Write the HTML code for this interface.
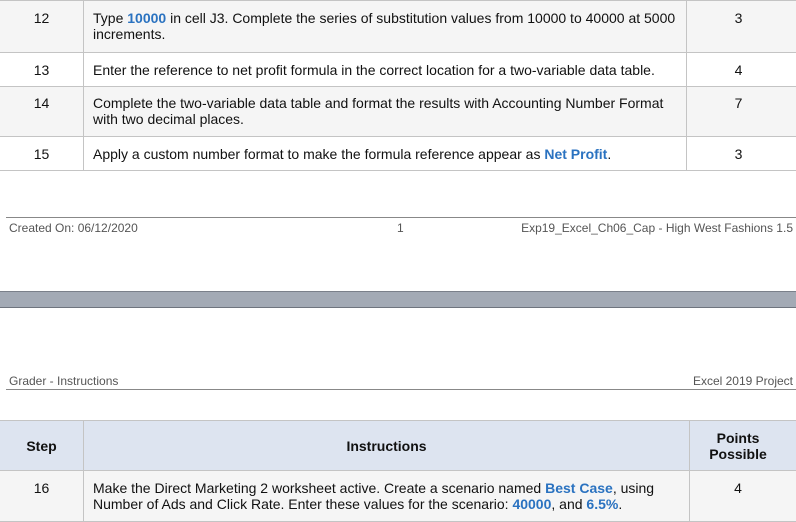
<!DOCTYPE html>
<html><head><style>
body{margin:0;width:796px;height:522px;background:#fff;font-family:"Liberation Sans",Arial,sans-serif;font-size:13px;color:#111;position:relative;overflow:hidden}
.a{position:absolute}
.h{position:absolute;left:0;width:796px;height:1px;background:#c4c4c4}
.v{position:absolute;width:1px;background:#c4c4c4}
.b{color:#2a72c0;font-weight:bold}
.num{position:absolute;width:83px;text-align:center}
.pts{position:absolute;left:687px;width:103px;text-align:center}
.txt{position:absolute;left:93px;width:585px;line-height:16px}
.t14{font-size:14px;line-height:16px}
</style></head><body>
<div class="a" style="left:0;top:1px;width:796px;height:51px;background:#f5f5f5"></div>
<div class="a" style="left:0;top:86px;width:796px;height:50px;background:#f5f5f5"></div>
<div class="h" style="top:0"></div>
<div class="h" style="top:52px"></div>
<div class="h" style="top:86px"></div>
<div class="h" style="top:136px"></div>
<div class="h" style="top:170px"></div>
<div class="v" style="left:83px;top:0;height:171px"></div>
<div class="v" style="left:686px;top:0;height:171px"></div>

<div class="num t14" style="top:10px">12</div>
<div class="txt t14" style="top:10px">Type <span class="b">10000</span> in cell J3. Complete the series of substitution values from 10000 to 40000 at 5000 increments.</div>
<div class="pts t14" style="top:10px">3</div>
<div class="num t14" style="top:62px">13</div>
<div class="txt t14" style="top:62px">Enter the reference to net profit formula in the correct location for a two-variable data table.</div>
<div class="pts t14" style="top:62px">4</div>
<div class="num t14" style="top:95px">14</div>
<div class="txt t14" style="top:95px">Complete the two-variable data table and format the results with Accounting Number Format with two decimal places.</div>
<div class="pts t14" style="top:95px">7</div>
<div class="num t14" style="top:146px">15</div>
<div class="txt t14" style="top:146px">Apply a custom number format to make the formula reference appear as <span class="b">Net Profit</span>.</div>
<div class="pts t14" style="top:146px">3</div>

<div class="a" style="left:6px;top:217px;width:790px;height:1px;background:#888"></div>
<div class="a" style="left:9px;top:221px;font-size:12px;color:#555">Created On: 06/12/2020</div>
<div class="a" style="left:397px;top:221px;font-size:12px;color:#555">1</div>
<div class="a" style="right:3px;top:221px;font-size:12px;color:#555">Exp19_Excel_Ch06_Cap - High West Fashions 1.5</div>

<div class="a" style="left:0;top:291px;width:796px;height:17px;background:#a3aab5;border-top:1px solid #7a808a;border-bottom:1px solid #6e747e;box-sizing:border-box"></div>

<div class="a" style="left:9px;top:374px;font-size:12px;color:#555">Grader - Instructions</div>
<div class="a" style="right:3px;top:374px;font-size:12px;color:#555">Excel 2019 Project</div>
<div class="a" style="left:6px;top:389px;width:790px;height:1px;background:#888"></div>

<div class="a" style="left:0;top:421px;width:796px;height:49px;background:#dde4f0"></div>
<div class="a" style="left:0;top:471px;width:796px;height:50px;background:#f5f5f5"></div>
<div class="h" style="top:420px"></div>
<div class="h" style="top:470px"></div>
<div class="h" style="top:521px"></div>
<div class="v" style="left:83px;top:420px;height:102px"></div>
<div class="v" style="left:689px;top:420px;height:102px"></div>
<div class="num t14" style="top:438px;font-weight:bold">Step</div>
<div class="a t14" style="left:84px;width:605px;text-align:center;top:438px;font-weight:bold">Instructions</div>
<div class="a t14" style="left:690px;width:96px;text-align:center;top:430px;font-weight:bold;line-height:16px">Points<br>Possible</div>
<div class="num t14" style="top:480px">16</div>
<div class="txt t14" style="top:480px;width:570px">Make the Direct Marketing 2 worksheet active. Create a scenario named <span class="b">Best Case</span>, using Number of Ads and Click Rate. Enter these values for the scenario: <span class="b">40000</span>, and <span class="b">6.5%</span>.</div>
<div class="a t14" style="left:690px;width:96px;text-align:center;top:480px">4</div>
</body></html>
